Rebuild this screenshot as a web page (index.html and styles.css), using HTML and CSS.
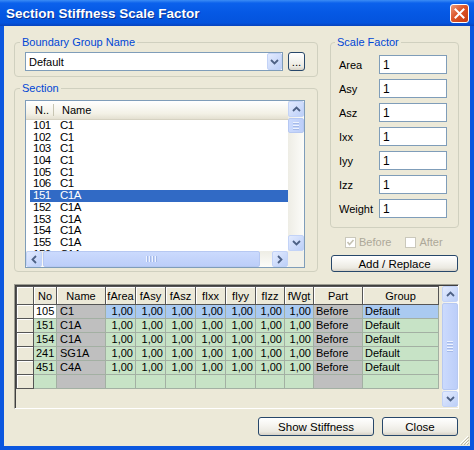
FILE: index.html
```html
<!DOCTYPE html>
<html lang="en">
<head>
  <meta charset="UTF-8" />
  <title>Section Stiffness Scale Factor</title>
  <link rel="stylesheet" href="styles.css">
</head>
<body>
<div class="window">
  <div class="titlebar">
    <span class="title">Section Stiffness Scale Factor</span>
    <span class="close-x">
      <svg width="11" height="11" viewBox="0 0 11 11"><path d="M1.5 1.5 L9.5 9.5 M9.5 1.5 L1.5 9.5" stroke="#fff" stroke-width="2" stroke-linecap="square"/></svg>
    </span>
  </div>

  <div class="client">
    <div class="top">
      <div class="left">
        <fieldset class="grp bgroup">
          <legend>Boundary Group Name</legend>
          <div class="combo-row">
            <div class="combo">
              <span>Default</span>
              <span class="drop"><svg width="9" height="6" viewBox="0 0 9 6"><polyline points="1,1 4.5,4.5 8,1" fill="none" stroke="#4d6185" stroke-width="1.8"/></svg></span>
            </div>
            <button class="btn dots">...</button>
          </div>
        </fieldset>

        <fieldset class="grp section">
          <legend>Section</legend>
          <div class="list">
            <div class="list-view">
              <div class="list-head"><span class="col-no">N..</span><span class="col-name">Name</span></div>
              <div class="list-rows">
                <div class="item"><span class="col-no">101</span><span>C1</span></div>
                <div class="item"><span class="col-no">102</span><span>C1</span></div>
                <div class="item"><span class="col-no">103</span><span>C1</span></div>
                <div class="item"><span class="col-no">104</span><span>C1</span></div>
                <div class="item"><span class="col-no">105</span><span>C1</span></div>
                <div class="item"><span class="col-no">106</span><span>C1</span></div>
                <div class="item sel"><span class="col-no">151</span><span>C1A</span></div>
                <div class="item"><span class="col-no">152</span><span>C1A</span></div>
                <div class="item"><span class="col-no">153</span><span>C1A</span></div>
                <div class="item"><span class="col-no">154</span><span>C1A</span></div>
                <div class="item"><span class="col-no">155</span><span>C1A</span></div>
                <div class="item"><span class="col-no">156</span><span>C1A</span></div>
              </div>
            </div>
            <div class="vscroll">
              <span class="sbtn"><svg width="9" height="6" viewBox="0 0 9 6"><polyline points="1,5 4.5,1.5 8,5" fill="none" stroke="#4d6185" stroke-width="1.8"/></svg></span>
              <span class="thumb vthumb"><i></i><i></i><i></i></span>
              <span class="track"></span>
              <span class="sbtn"><svg width="9" height="6" viewBox="0 0 9 6"><polyline points="1,1 4.5,4.5 8,1" fill="none" stroke="#4d6185" stroke-width="1.8"/></svg></span>
            </div>
            <div class="hscroll">
              <span class="sbtn"><svg width="6" height="9" viewBox="0 0 6 9"><polyline points="5,1 1.5,4.5 5,8" fill="none" stroke="#4d6185" stroke-width="1.8"/></svg></span>
              <span class="thumb hthumb"><i></i><i></i><i></i><i></i></span>
              <span class="track"></span>
              <span class="sbtn"><svg width="6" height="9" viewBox="0 0 6 9"><polyline points="1,1 4.5,4.5 1,8" fill="none" stroke="#4d6185" stroke-width="1.8"/></svg></span>
            </div>
            <div class="corner"></div>
          </div>
        </fieldset>
      </div>

      <div class="right">
        <fieldset class="grp scale">
          <legend>Scale Factor</legend>
          <div class="factors">
            <div class="factor"><label>Area</label><input type="text" value="1"></div>
            <div class="factor"><label>Asy</label><input type="text" value="1"></div>
            <div class="factor"><label>Asz</label><input type="text" value="1"></div>
            <div class="factor"><label>Ixx</label><input type="text" value="1"></div>
            <div class="factor"><label>Iyy</label><input type="text" value="1"></div>
            <div class="factor"><label>Izz</label><input type="text" value="1"></div>
            <div class="factor"><label>Weight</label><input type="text" value="1"></div>
          </div>
        </fieldset>
        <div class="checks">
          <span class="chk"><span class="box"><svg width="9" height="9" viewBox="0 0 9 9"><polyline points="1.5,4 3.5,6.5 7.5,2" fill="none" stroke="#c5c2b2" stroke-width="1.6"/></svg></span>Before</span>
          <span class="chk"><span class="box"></span>After</span>
        </div>
        <button class="btn add">Add / Replace</button>
      </div>
    </div>

    <div class="grid">
      <table class="sheet">
        <colgroup>
          <col class="w-rh"><col class="w-no"><col class="w-name">
          <col class="w-num"><col class="w-num"><col class="w-num"><col class="w-num"><col class="w-num">
          <col class="w-num2"><col class="w-num2"><col class="w-part"><col class="w-group">
        </colgroup>
        <thead>
          <tr><th></th><th>No</th><th>Name</th><th>fArea</th><th>fAsy</th><th>fAsz</th><th>fIxx</th><th>fIyy</th><th>fIzz</th><th>fWgt</th><th>Part</th><th>Group</th></tr>
        </thead>
        <tbody>
          <tr class="sel"><td class="rh"></td><td class="no">105</td><td class="name">C1</td><td class="num">1,00</td><td class="num">1,00</td><td class="num">1,00</td><td class="num">1,00</td><td class="num">1,00</td><td class="num">1,00</td><td class="num">1,00</td><td class="part">Before</td><td class="grpc">Default</td></tr>
          <tr><td class="rh"></td><td class="no">151</td><td class="name">C1A</td><td class="num">1,00</td><td class="num">1,00</td><td class="num">1,00</td><td class="num">1,00</td><td class="num">1,00</td><td class="num">1,00</td><td class="num">1,00</td><td class="part">Before</td><td class="grpc">Default</td></tr>
          <tr><td class="rh"></td><td class="no">154</td><td class="name">C1A</td><td class="num">1,00</td><td class="num">1,00</td><td class="num">1,00</td><td class="num">1,00</td><td class="num">1,00</td><td class="num">1,00</td><td class="num">1,00</td><td class="part">Before</td><td class="grpc">Default</td></tr>
          <tr><td class="rh"></td><td class="no">241</td><td class="name">SG1A</td><td class="num">1,00</td><td class="num">1,00</td><td class="num">1,00</td><td class="num">1,00</td><td class="num">1,00</td><td class="num">1,00</td><td class="num">1,00</td><td class="part">Before</td><td class="grpc">Default</td></tr>
          <tr><td class="rh"></td><td class="no">451</td><td class="name">C4A</td><td class="num">1,00</td><td class="num">1,00</td><td class="num">1,00</td><td class="num">1,00</td><td class="num">1,00</td><td class="num">1,00</td><td class="num">1,00</td><td class="part">Before</td><td class="grpc">Default</td></tr>
          <tr><td class="rh"></td><td class="no"></td><td class="name"></td><td class="num"></td><td class="num"></td><td class="num"></td><td class="num"></td><td class="num"></td><td class="num"></td><td class="num"></td><td class="part"></td><td class="grpc"></td></tr>
        </tbody>
      </table>
      <div class="gscroll">
        <span class="sbtn"><svg width="9" height="6" viewBox="0 0 9 6"><polyline points="1,5 4.5,1.5 8,5" fill="none" stroke="#4d6185" stroke-width="1.8"/></svg></span>
        <span class="thumb gthumb"><i></i><i></i><i></i><i></i></span>
        <span class="sbtn"><svg width="9" height="6" viewBox="0 0 9 6"><polyline points="1,1 4.5,4.5 8,1" fill="none" stroke="#4d6185" stroke-width="1.8"/></svg></span>
      </div>
    </div>

    <div class="actions">
      <button class="btn show">Show Stiffness</button>
      <button class="btn close">Close</button>
    </div>

    <svg class="grip" width="10" height="10" viewBox="0 0 10 10">
      <path d="M9 1 L1 9 M9 4 L4 9 M9 7 L7 9" stroke="#fff" stroke-width="1"/>
      <path d="M10 2 L2 10 M10 5 L5 10 M10 8 L8 10" stroke="#bdb9a6" stroke-width="1"/>
    </svg>
  </div>
</div>
</body>
</html>
```

FILE: styles.css
```css
body {
  margin: 0;
  background: #fff;
  font-family: "Liberation Sans", Arial, sans-serif;
  font-size: 11px;
  color: #000;
}
.window {
  width: 474px;
  height: 450px;
  display: flex;
  flex-direction: column;
  background: #0b57df;
}
.titlebar {
  height: 26px;
  flex: none;
  display: flex;
  align-items: center;
  justify-content: space-between;
  padding: 0 5px 0 6px;
  background: linear-gradient(#3b8cf5 0%, #0b61ec 12%, #0558e4 50%, #0453dd 88%, #0843bd 100%);
}
.title {
  color: #fff;
  font-weight: bold;
  font-size: 13.5px;
  text-shadow: 1px 1px 0 #0a2f8e;
}
.close-x {
  width: 19px;
  height: 19px;
  box-sizing: border-box;
  border: 1px solid #fff;
  border-radius: 3px;
  background: linear-gradient(135deg, #ec9a7c, #dc5428 45%, #c63b10);
  display: flex;
  align-items: center;
  justify-content: center;
}
.client {
  position: relative;
  flex: 1;
  margin: 0 4px 4px;
  background: #ece9d8;
  padding: 9px 11px 0 10px;
  display: flex;
  flex-direction: column;
}
.grip {
  position: absolute;
  right: 1px;
  bottom: 1px;
}
.top {
  display: flex;
  gap: 12px;
}
.left {
  width: 304px;
  display: flex;
  flex-direction: column;
  gap: 4px;
}
.right {
  width: 129px;
  display: flex;
  flex-direction: column;
}

/* group boxes */
.grp {
  margin: 0;
  min-width: 0;
  border: 1px solid #d0d0bf;
  border-radius: 4px;
}
.grp legend {
  color: #0046d5;
  padding: 0 2px;
  line-height: 14px;
}
.bgroup {
  padding: 3px 12px 5px 10px;
}
.section {
  padding: 5px 12px 3px 10px;
}
.bgroup legend,
.section legend {
  margin-left: -5px;
}
.scale {
  padding: 6px 11px 9px 8px;
}
.scale legend {
  margin-left: -4px;
}

/* combo */
.combo-row {
  display: flex;
  gap: 5px;
}
.combo {
  width: 258px;
  height: 19px;
  box-sizing: border-box;
  border: 1px solid #7f9db9;
  background: #fff;
  display: flex;
  align-items: center;
  justify-content: space-between;
  padding: 0 0 0 3px;
}
.drop {
  width: 15px;
  height: 17px;
  box-sizing: border-box;
  border: 1px solid #c3d3f7;
  border-radius: 2px;
  background: linear-gradient(135deg, #e3ebfe, #bccff8);
  display: flex;
  align-items: center;
  justify-content: center;
}

/* buttons */
.btn {
  box-sizing: border-box;
  border: 1px solid #27476a;
  border-radius: 3px;
  background: linear-gradient(#fff 0%, #f6f5f1 40%, #ebe9e1 80%, #d6d1c6 100%);
  font-family: "Liberation Sans", Arial, sans-serif;
  font-size: 11.5px;
  color: #000;
  padding: 0;
}
.dots {
  width: 17px;
  height: 19px;
  line-height: 14px;
}
.add {
  margin: 6px 0 0 1px;
  width: 127px;
  height: 17px;
}

/* list view */
.list {
  width: 280px;
  height: 168px;
  box-sizing: border-box;
  border: 1px solid #7f9db9;
  background: #fff;
  display: grid;
  grid-template-columns: 1fr 16px;
  grid-template-rows: 1fr 16px;
}
.list-view {
  overflow: hidden;
}
.list-head {
  height: 18px;
  display: flex;
  align-items: center;
  background: linear-gradient(#fff, #f3f1e6 70%, #e4e0d1);
  border-bottom: 1px solid #d6d2c2;
}
.list-head .col-no {
  width: 18px;
  padding-left: 9px;
  border-right: 1px solid #c7c5b2;
}
.list-head .col-name {
  padding-left: 8px;
}
.item {
  height: 11.7px;
  line-height: 11.7px;
  margin-left: 4px;
  padding-left: 3px;
  display: flex;
  font-size: 11.5px;
  letter-spacing: -0.5px;
}
.item .col-no {
  width: 27px;
}
.item.sel {
  background: #316ac5;
  color: #fff;
}

/* scroll bars */
.vscroll,
.gscroll {
  display: flex;
  flex-direction: column;
  background: linear-gradient(to right, #eeede5, #fcfcf9);
}
.hscroll {
  display: flex;
  background: linear-gradient(#eeede5, #fcfcf9);
}
.sbtn {
  flex: none;
  width: 16px;
  height: 16px;
  box-sizing: border-box;
  border: 1px solid #c3d3f7;
  border-radius: 2px;
  background: linear-gradient(135deg, #e3ebfe, #bccff8);
  display: flex;
  align-items: center;
  justify-content: center;
}
.thumb {
  box-sizing: border-box;
  border: 1px solid #b6c8f2;
  border-radius: 2px;
  background: linear-gradient(to right, #cbdafd, #bccef9);
  display: flex;
  align-items: center;
  justify-content: center;
  gap: 1px;
}
.thumb i {
  display: block;
  background: #eef3fe;
  border-bottom: 1px solid #a4b9e8;
}
.vthumb,
.gthumb {
  flex-direction: column;
}
.vthumb i,
.gthumb i {
  width: 6px;
  height: 1px;
}
.vthumb {
  height: 15px;
  margin-top: 1px;
}
.gthumb {
  flex: 1;
  margin: 1px 0;
}
.hthumb {
  flex: 0 0 217px;
  margin-left: 1px;
  background: linear-gradient(#cbdafd, #bccef9);
}
.hthumb i {
  width: 1px;
  height: 6px;
  border-bottom: none;
  border-right: 1px solid #a4b9e8;
}
.track {
  flex: 1;
}
.corner {
  background: #f2f1ea;
}

/* scale factor */
.factors {
  display: flex;
  flex-direction: column;
  gap: 5px;
}
.factor {
  display: flex;
  align-items: center;
  height: 19px;
}
.factor label {
  width: 40px;
}
.factor input {
  width: 68px;
  height: 19px;
  box-sizing: border-box;
  border: 1px solid #7f9db9;
  padding: 0 3px;
  margin: 0;
  font-family: "Liberation Sans", Arial, sans-serif;
  font-size: 12px;
}
.checks {
  display: flex;
  align-items: center;
  height: 14px;
  margin-top: 7px;
  padding-left: 15px;
  gap: 14px;
  color: #aca899;
}
.chk {
  display: flex;
  align-items: center;
  gap: 3px;
}
.box {
  width: 11px;
  height: 11px;
  box-sizing: border-box;
  border: 1px solid #cac8bb;
  background: #fff;
  display: flex;
  align-items: center;
  justify-content: center;
}

/* data grid */
.grid {
  margin-top: 12px;
  height: 125px;
  box-sizing: border-box;
  border: 1px solid;
  border-color: #9d9d92 #fff #fff #9d9d92;
  box-shadow: inset 1px 1px 0 #404040;
  padding: 1px 0 0 1px;
  display: flex;
  align-items: flex-start;
  gap: 3px;
}
.sheet {
  border-collapse: collapse;
  table-layout: fixed;
  width: 422px;
  font-size: 11px;
}
.w-rh { width: 17px; }
.w-no { width: 23px; }
.w-name { width: 49px; }
.w-num { width: 30px; }
.w-num2 { width: 29px; }
.w-part { width: 49px; }
.w-group { width: 76px; }
.sheet th {
  height: 17px;
  padding: 0;
  background: #ece9d8;
  border: 1px solid #555;
  box-shadow: inset 1px 1px 0 #fff;
  font-weight: normal;
  white-space: nowrap;
  overflow: hidden;
}
.sheet td {
  height: 13px;
  padding: 0 2px;
  line-height: 13px;
  border: 1px solid #a3b0a3;
  background: #c7e3c6;
  white-space: nowrap;
  overflow: hidden;
}
.sheet td.rh {
  background: #ece9d8;
  border-color: #555;
  box-shadow: inset 1px 1px 0 #fff;
}
.sheet td.no,
.sheet td.num {
  text-align: right;
}
.sheet td.no {
  padding-right: 3px;
}
.sheet td.name {
  padding-left: 3px;
}
.sheet td.name,
.sheet td.part {
  background: #bfbfbf;
}
.sheet tr.sel td.no {
  background: #fff;
}
.sheet tr.sel td.num,
.sheet tr.sel td.grpc {
  background: #aacaf1;
}
.gscroll {
  width: 16px;
  height: 121px;
}

/* bottom buttons */
.actions {
  margin: 8px 1px 0 0;
  display: flex;
  justify-content: flex-end;
  gap: 8px;
}
.show {
  width: 116px;
  height: 19px;
}
.close {
  width: 76px;
  height: 19px;
}
```
